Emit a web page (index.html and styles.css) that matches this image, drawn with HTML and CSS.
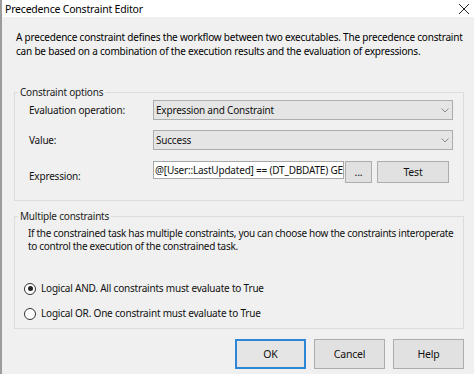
FILE: index.html
```html
<!DOCTYPE html>
<html lang="en">
<head>
  <meta charset="UTF-8">
  <title>Precedence Constraint Editor</title>
  <link rel="stylesheet" href="styles.css">
</head>
<body>
  <div class="window">
    <div class="titlebar">
      <div class="title">Precedence Constraint Editor</div>
      <svg class="close" width="12" height="12" viewBox="0 0 12 12">
        <path d="M1 1 L11 11 M11 1 L1 11" stroke="#222" stroke-width="1" fill="none"/>
      </svg>
    </div>

    <div class="content">
      <p class="intro">A precedence constraint defines the workflow between two executables. The precedence constraint<br>can be based on a combination of the execution results and the evaluation of expressions.</p>

      <fieldset class="group options">
        <legend>Constraint options</legend>
        <div class="rows">
          <div class="row">
            <div class="label">Evaluation operation:</div>
            <div class="combo">
              <span>Expression and Constraint</span>
              <svg class="chev" width="8" height="5" viewBox="0 0 8 5"><path d="M0.5 0.5 L4 4 L7.5 0.5" stroke="#8a8a8a" fill="none"/></svg>
            </div>
          </div>
          <div class="row">
            <div class="label">Value:</div>
            <div class="combo">
              <span>Success</span>
              <svg class="chev" width="8" height="5" viewBox="0 0 8 5"><path d="M0.5 0.5 L4 4 L7.5 0.5" stroke="#8a8a8a" fill="none"/></svg>
            </div>
          </div>
          <div class="row expr-row">
            <div class="label">Expression:</div>
            <div class="expr">
              <div class="textbox">@[User::LastUpdated] == (DT_DBDATE) GETDATE()</div>
              <button class="btn dots">...</button>
              <button class="btn test">Test</button>
            </div>
          </div>
        </div>
      </fieldset>

      <fieldset class="group multi">
        <legend>Multiple constraints</legend>
        <p class="multi-text">If the constrained task has multiple constraints, you can choose how the constraints interoperate<br>to control the execution of the constrained task.</p>
        <div class="radios">
          <div class="radio checked"><span class="dot"></span>Logical AND. All constraints must evaluate to True</div>
          <div class="radio"><span class="dot"></span>Logical OR. One constraint must evaluate to True</div>
        </div>
      </fieldset>

      <div class="buttons">
        <button class="btn big default">OK</button>
        <button class="btn big">Cancel</button>
        <button class="btn big">Help</button>
      </div>
    </div>
  </div>
</body>
</html>
```

FILE: styles.css
```css
body {
  margin: 0;
  font-family: 'Noto Sans', 'Open Sans', sans-serif;
  font-size: 10px;
  letter-spacing: -0.2px;
  color: #111;
  background: #f0f0f0;
}

.window {
  width: 472px;
  height: 374px;
  border-left: 2px solid #9c9c9c;
  background: #f0f0f0;
  overflow: hidden;
}

.titlebar {
  height: 17px;
  background: #ffffff;
  display: flex;
  justify-content: space-between;
  align-items: center;
  padding: 0 4px 0 3px;
}

.title {
  font-size: 10.5px;
  color: #000;
}

.close {
  margin-top: 1px;
}

.content {
  padding: 13px 10px 0 12px;
}

.intro {
  margin: 0 0 28px 2px;
  line-height: 14px;
  white-space: nowrap;
  color: #000;
}

.group {
  margin: 0;
  border: 1px solid #dcdcdc;
  padding: 0 10px 0 4px;
}

.group legend {
  padding: 0 2px;
  margin-left: -1px;
  line-height: 13px;
  color: #222;
}

.rows {
  padding: 1px 0 17px 10px;
  display: flex;
  flex-direction: column;
  gap: 10px;
}

.row {
  display: flex;
  align-items: center;
}

.row .label {
  width: 124px;
  flex-shrink: 0;
}

.combo {
  flex: 1;
  height: 18px;
  border: 1px solid #adadad;
  background: #e5e5e5;
  display: flex;
  justify-content: space-between;
  align-items: center;
  padding: 0 3px 0 2px;
}

.expr-row {
  align-items: flex-end;
  margin-top: 1px;
}

.expr {
  flex: 1;
  display: flex;
  align-items: flex-start;
}

.textbox {
  width: 186px;
  height: 16px;
  line-height: 16px;
  border: 1px solid #a8a8a8;
  background: #ffffff;
  padding: 0 2px 0 1px;
  white-space: nowrap;
  overflow: hidden;
}

.btn {
  font-family: inherit;
  font-size: 10.5px;
  letter-spacing: -0.2px;
  color: #111;
  background: #e1e1e1;
  border: 1px solid #adadad;
  padding: 0;
}

.dots {
  width: 27px;
  height: 22px;
  margin-left: 1px;
  line-height: 10px;
}

.test {
  width: 72px;
  height: 22px;
  margin-left: 5px;
}

.multi {
  margin-top: 9px;
  padding-bottom: 0;
}

.multi-text {
  margin: 4px 0 0 9px;
  line-height: 12.5px;
  letter-spacing: -0.3px;
  white-space: nowrap;
}

.radios {
  display: flex;
  flex-direction: column;
  gap: 12px;
  padding: 30px 0 8px 6px;
}

.radio {
  display: flex;
  align-items: center;
  line-height: 13px;
}

.dot {
  width: 12px;
  height: 12px;
  box-sizing: border-box;
  border: 1px solid #333;
  border-radius: 50%;
  margin-right: 5px;
  margin-left: -1px;
  position: relative;
  background: #fff;
}

.radio.checked .dot::after {
  content: "";
  position: absolute;
  left: 2.5px;
  top: 2.5px;
  width: 5px;
  height: 5px;
  border-radius: 50%;
  background: #222;
}

.buttons {
  display: flex;
  justify-content: flex-end;
  gap: 8px;
  margin-top: 10px;
}

.big {
  width: 71px;
  height: 30px;
}

.default {
  border: 2px solid #2e86d6;
  background: #e5e5e5;
}
```
